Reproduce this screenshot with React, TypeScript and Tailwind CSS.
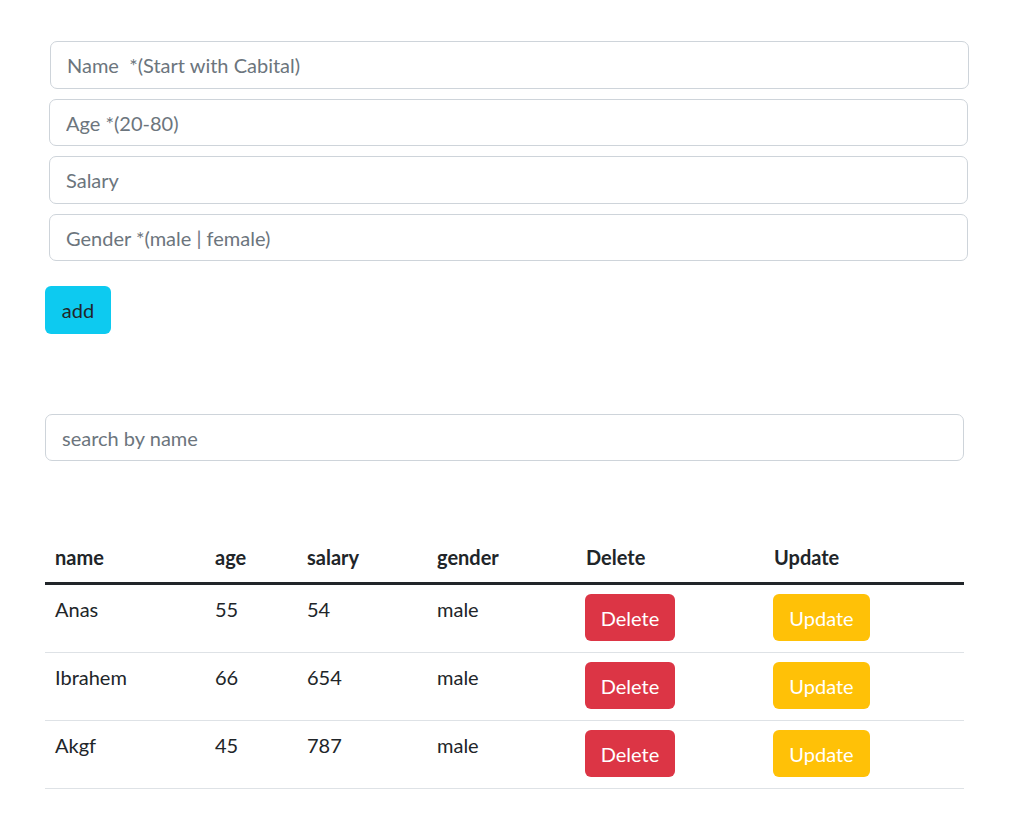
import React, { useState } from 'react';

interface Person {
  name: string;
  age: number;
  salary: number;
  gender: string;
}

const initial: Person[] = [
  { name: 'Anas', age: 55, salary: 54, gender: 'male' },
  { name: 'Ibrahem', age: 66, salary: 654, gender: 'male' },
  { name: 'Akgf', age: 45, salary: 787, gender: 'male' },
];

const inputCls =
  'block w-[919px] px-4 text-[20px] leading-[30px] text-[#212529] bg-white border border-[#ced4da] rounded-[7px] placeholder:text-[#6c757d] outline-none';

export default function App() {
  const [people, setPeople] = useState<Person[]>(initial);
  const [search, setSearch] = useState('');

  const shown = people.filter((p) => p.name.toLowerCase().includes(search.toLowerCase()));

  return (
    <div className="min-h-[834px] bg-white text-[#212529] font-['Lato',sans-serif] pt-[41px] pl-[45px]">
      <div className="flex flex-col gap-[10px]">
        <input className={`${inputCls} ml-[5px] h-[48px]`} placeholder="Name  *(Start with Cabital)" />
        <input className={`${inputCls} ml-[4px] h-[47px]`} placeholder="Age *(20-80)" />
        <input className={`${inputCls} ml-[4px] h-[48px]`} placeholder="Salary" />
        <input className={`${inputCls} ml-[4px] h-[47px]`} placeholder="Gender *(male | female)" />
      </div>

      <button className="mt-[25px] h-[48px] w-[66px] text-[20px] leading-[30px] text-[#212529] bg-[#0dcaf0] rounded-[6px]">
        add
      </button>

      <input
        className={`${inputCls} mt-[80px] h-[47px]`}
        placeholder="search by name"
        value={search}
        onChange={(e) => setSearch(e.target.value)}
      />

      <table className="mt-[73px] w-[919px] border-collapse text-[20px] leading-[30px] text-left">
        <thead>
          <tr className="border-b-[3px] border-[#212529]">
            <th className="w-[160px] px-[10px] pt-[8px] pb-[10px] font-bold">name</th>
            <th className="w-[92px] px-[10px] pt-[8px] pb-[10px] font-bold">age</th>
            <th className="w-[130px] px-[10px] pt-[8px] pb-[10px] font-bold">salary</th>
            <th className="w-[149px] px-[10px] pt-[8px] pb-[10px] font-bold">gender</th>
            <th className="w-[188px] px-[10px] pt-[8px] pb-[10px] font-bold">Delete</th>
            <th className="px-[10px] pt-[8px] pb-[10px] font-bold">Update</th>
          </tr>
        </thead>
        <tbody>
          {shown.map((p, i) => (
            <tr key={i} className="border-b border-[#dee2e6] align-top">
              <td className="px-[10px] pt-[9px] pb-[10px]">{p.name}</td>
              <td className="px-[10px] pt-[9px] pb-[10px]">{p.age}</td>
              <td className="px-[10px] pt-[9px] pb-[10px]">{p.salary}</td>
              <td className="px-[10px] pt-[9px] pb-[10px]">{p.gender}</td>
              <td className="px-[10px] pt-[9px] pb-[11px]">
                <button
                  onClick={() => setPeople(people.filter((x) => x !== p))}
                  className="block -ml-px h-[47px] w-[90px] text-[20px] text-white bg-[#dc3545] rounded-[6px]"
                >
                  Delete
                </button>
              </td>
              <td className="px-[10px] pt-[9px] pb-[11px]">
                <button className="block -ml-px h-[47px] w-[97px] text-[20px] text-white bg-[#ffc107] rounded-[6px]">
                  Update
                </button>
              </td>
            </tr>
          ))}
        </tbody>
      </table>
    </div>
  );
}
